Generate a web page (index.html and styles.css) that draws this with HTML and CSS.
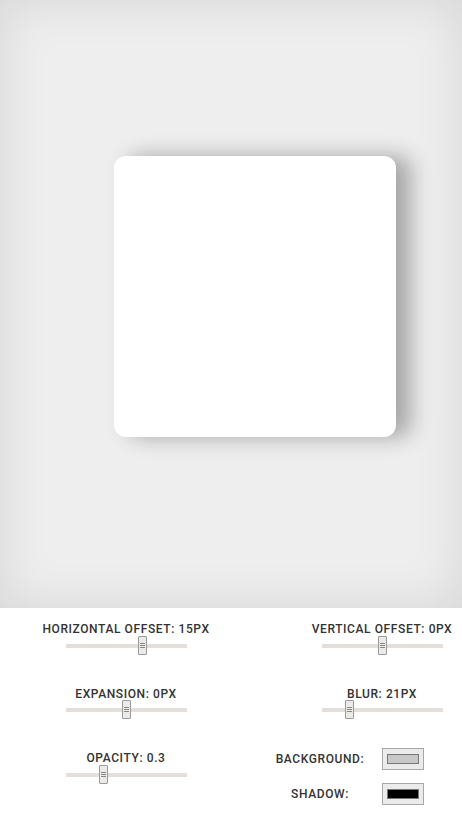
FILE: index.html
```html
<!DOCTYPE html>
<html>
<head>
<meta charset="utf-8">
<link rel="stylesheet" href="styles.css">
</head>
<body>
<div class="preview">
  <div class="box"></div>
</div>
<div class="controls">
  <div class="row">
    <div class="cell left">
      <div class="label">Horizontal offset: 15px</div>
      <input class="slider" type="range" min="-50" max="50" value="15">
    </div>
    <div class="cell right">
      <div class="label">Vertical offset: 0px</div>
      <input class="slider" type="range" min="-50" max="50" value="0">
    </div>
  </div>
  <div class="row">
    <div class="cell left">
      <div class="label">Expansion: 0px</div>
      <input class="slider" type="range" min="-50" max="50" value="0">
    </div>
    <div class="cell right">
      <div class="label">Blur: 21px</div>
      <input class="slider" type="range" min="0" max="100" value="21">
    </div>
  </div>
  <div class="row">
    <div class="cell left">
      <div class="label">Opacity: 0.3</div>
      <input class="slider" type="range" min="0" max="1" step="0.01" value="0.3">
    </div>
    <div class="colors">
      <div class="color-row">
        <span class="label color-label">Background:</span>
        <span class="swatch"><span class="swatch-inner bg"></span></span>
      </div>
      <div class="color-row">
        <span class="label color-label">Shadow:</span>
        <span class="swatch"><span class="swatch-inner sh"></span></span>
      </div>
    </div>
  </div>
</div>
</body>
</html>
```
FILE: styles.css
```css
html, body {
  margin: 0;
  padding: 0;
}
body {
  width: 462px;
  height: 813px;
  overflow: hidden;
  background: #fff;
  font-family: Roboto, "Liberation Sans", sans-serif;
}
.preview {
  height: 608px;
  background: #eeeeee;
  box-shadow: inset 0 0 50px rgba(0, 0, 0, 0.1);
  padding: 156px 0 0 114px;
  box-sizing: border-box;
}
.box {
  width: 282px;
  height: 281px;
  background: #fff;
  border-radius: 12px;
  box-shadow: 15px 0 21px 0 rgba(0, 0, 0, 0.3);
}
.controls {
  padding-top: 14px;
}
.row {
  display: flex;
  height: 64.5px;
}
.cell {
  display: flex;
  flex-direction: column;
  align-items: center;
}
.cell.left {
  width: 252px;
}
.cell.right {
  width: 160px;
  margin-left: 50px;
}
.label {
  font-size: 12px;
  font-weight: 500;
  letter-spacing: 0.6px;
  text-transform: uppercase;
  color: #333;
  line-height: 14px;
  white-space: nowrap;
}
.slider {
  -webkit-appearance: none;
  appearance: none;
  width: 121px;
  height: 19px;
  margin: 0;
  padding: 0;
  background: transparent;
}
.slider::-webkit-slider-runnable-track {
  height: 4px;
  background: #e3dfda;
  border: none;
}
.slider::-webkit-slider-thumb {
  -webkit-appearance: none;
  width: 9px;
  height: 19px;
  margin-top: -8px;
  box-sizing: border-box;
  border: 1px solid #9a9a9a;
  border-radius: 1px;
  background:
    linear-gradient(#888, #888) center 6px / 5px 1px no-repeat,
    linear-gradient(#888, #888) center 8px / 5px 1px no-repeat,
    linear-gradient(#888, #888) center 10px / 5px 1px no-repeat,
    #eceae7;
}
.colors {
  display: flex;
  flex-direction: column;
  gap: 13px;
  margin-top: -3px;
}
.color-row {
  display: flex;
  align-items: center;
}
.color-label {
  width: 112px;
  text-align: center;
  margin-left: 12px;
}
.swatch {
  display: flex;
  align-items: center;
  justify-content: center;
  width: 42px;
  height: 22px;
  box-sizing: border-box;
  border: 1px solid #a8a8a8;
  background: #ebebeb;
  margin-left: 6px;
}
.swatch-inner {
  width: 32px;
  height: 10px;
  box-sizing: border-box;
  border: 1px solid #777;
}
.swatch-inner.bg {
  background: #c8c8c8;
}
.swatch-inner.sh {
  background: #000;
}
```
